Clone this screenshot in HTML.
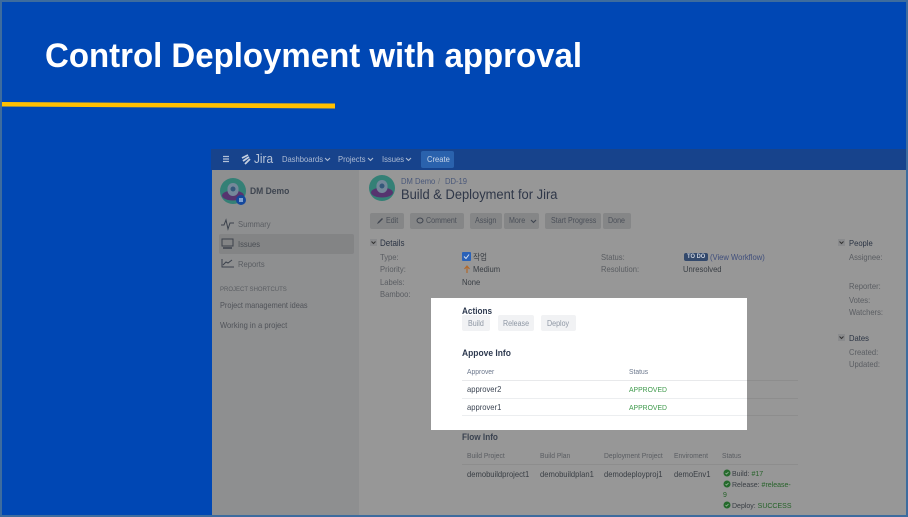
<!DOCTYPE html>
<html><head><meta charset="utf-8">
<style>
html,body{margin:0;padding:0}
body{width:908px;height:517px;overflow:hidden;position:relative;background:#0047b4;font-family:"Liberation Sans","Noto Sans CJK KR",sans-serif}
#frame{position:absolute;left:0;top:0;width:904px;height:513px;border:2px solid #3d6c9e;z-index:20;pointer-events:none}
.abs{position:absolute}
.t{position:absolute;white-space:nowrap;line-height:12px;font-size:8.4px;color:#4b5059;filter:blur(.3px);transform:scaleX(.91);transform-origin:0 50%}
.l{color:#5a5d62}
.d{color:#393e44}
.h{color:#2b3444}
.g{color:#266229}
.k{font-size:7.800px}
.b{position:absolute;top:213px;height:16px;background:#858687;border-radius:2px}
.w{color:#8d96a3;font-size:7.800px}
.ab{position:absolute;top:315px;height:16px;background:#f1f2f4;border-radius:2px}
.sm{font-size:7.400px}
</style></head><body>
<svg class="abs" style="left:0;top:0" width="908" height="517">
<text x="45" y="67" font-family="Liberation Sans" font-weight="bold" font-size="34" fill="#fff" textLength="537" lengthAdjust="spacingAndGlyphs">Control Deployment with approval</text>
<polygon points="2,102 180,103 335,103.500 335,108.500 180,107.500 2,106.500" fill="#ffc000"/>
</svg>
<div class="abs" style="left:212px;top:149px;width:696px;height:368px;background:#979797"></div>
<div class="abs" style="left:211px;top:149px;width:697px;height:21px;background:#17438c"></div>
<div class="abs" style="left:212px;top:170px;width:147px;height:346px;background:#8e8f90"></div>
<div class="abs" style="left:219px;top:234px;width:135px;height:20px;background:#838485;border-radius:2px"></div>
<div class="abs" style="left:421px;top:151px;width:33px;height:17px;background:#2a62ad;border-radius:2px"></div>

<!-- nav -->
<svg class="abs" style="left:211px;top:149px;filter:blur(.3px)" width="210" height="21">
<path d="M12 7.500h6M12 10h6M12 12.500h6" stroke="#b4c2d8" stroke-width="1.300"/>
<path d="M31 9l6-3M32 12l6-4M34 15l5-5" stroke="#c7d1e1" stroke-width="1.800" fill="none"/>
<path d="M114 9l2.500 2.500 2.500-2.500M157 9l2.500 2.500 2.500-2.500M195 9l2.500 2.500 2.500-2.500" stroke="#aebcd4" stroke-width="1.100" fill="none"/>
</svg>
<span class="t" style="left:254px;top:153px;font-size:13px;color:#b8c4d8">Jira</span>
<span class="t" style="left:282px;top:153px;color:#aebcd4">Dashboards</span>
<span class="t" style="left:338px;top:153px;color:#aebcd4">Projects</span>
<span class="t" style="left:382px;top:153px;color:#aebcd4">Issues</span>
<span class="t" style="left:427px;top:153px;color:#c8d5e8;font-size:8.400px">Create</span>

<!-- avatars -->
<svg class="abs" style="left:219px;top:177px;filter:blur(.3px)" width="32" height="32">
<circle cx="14" cy="14" r="13" fill="#348076"/><ellipse cx="14" cy="18.500" rx="11" ry="5" fill="#56346f"/><rect x="8.500" y="6" width="11" height="13" rx="5.500" fill="#74889a"/><circle cx="14" cy="12" r="2.500" fill="#35587a"/>
<circle cx="22" cy="23" r="5" fill="#14489c"/><rect x="20" y="21" width="4" height="4" fill="#7fa0d0"/>
</svg>
<svg class="abs" style="left:369px;top:175px;filter:blur(.3px)" width="28" height="28">
<circle cx="13" cy="13" r="13" fill="#348076"/><ellipse cx="13" cy="17.500" rx="11" ry="5" fill="#56346f"/><rect x="7.500" y="5" width="11" height="13" rx="5.500" fill="#74889a"/><circle cx="13" cy="11" r="2.500" fill="#35587a"/>
</svg>

<!-- sidebar -->
<span class="t" style="left:250px;top:185px;font-size:9.400px;font-weight:bold;color:#3e4550">DM Demo</span>
<svg class="abs" style="left:220px;top:216px;filter:blur(.3px)" width="16" height="56">
<path d="M1 9h3l2-5 2 9 2-6h4" stroke="#3c424c" fill="none" stroke-width="1"/>
<rect x="2" y="23" width="11" height="7" fill="none" stroke="#3c424c"/><path d="M3 32h9" stroke="#3c424c" stroke-width="1.500"/>
<path d="M2 43v8h12M3 49l3-3 2 1 4-3" stroke="#3c424c" fill="none"/>
</svg>
<span class="t l" style="left:238px;top:218px">Summary</span>
<span class="t l" style="left:238px;top:238px;color:#4a4e54">Issues</span>
<span class="t l" style="left:238px;top:258px">Reports</span>
<span class="t l" style="left:220px;top:284px;font-size:6.600px">PROJECT SHORTCUTS</span>
<span class="t l" style="left:220px;top:300px;color:#505359;font-size:8.100px">Project management ideas</span>
<span class="t l" style="left:220px;top:319px;color:#505359">Working in a project</span>

<!-- header -->
<span class="t" style="left:401px;top:175px;color:#4a587a">DM Demo</span>
<span class="t" style="left:438px;top:175px;color:#6a6f78">/</span>
<span class="t" style="left:445px;top:175px;color:#4a587a">DD-19</span>
<span class="t" style="left:401px;top:189px;font-size:14.200px;color:#2f3748">Build &amp; Deployment for Jira</span>

<div class="b" style="left:370px;width:34px"></div>
<div class="b" style="left:410px;width:54px"></div>
<div class="b" style="left:470px;width:32px"></div>
<div class="b" style="left:504px;width:35px"></div>
<div class="b" style="left:545px;width:56px"></div>
<div class="b" style="left:603px;width:28px"></div>
<svg class="abs" style="left:376px;top:217px" width="8" height="8"><path d="M1 7l1-2 4-4 1 1-4 4z" fill="#3f4550"/></svg>
<span class="t k" style="left:386px;top:215px">Edit</span>
<svg class="abs" style="left:416px;top:217px" width="8" height="8"><ellipse cx="4" cy="3.500" rx="3" ry="2.500" fill="none" stroke="#3f4550"/></svg>
<span class="t k" style="left:426px;top:215px">Comment</span>
<span class="t k" style="left:475px;top:215px">Assign</span>
<span class="t k" style="left:509px;top:215px">More</span>
<svg class="abs" style="left:530px;top:219px" width="7" height="5"><path d="M1 1l2.500 2.500L6 1" stroke="#3f4550" fill="none" stroke-width="1.100"/></svg>
<span class="t k" style="left:551px;top:215px">Start Progress</span>
<span class="t k" style="left:608px;top:215px">Done</span>

<!-- details -->
<svg class="abs" style="left:370px;top:239px" width="8" height="8"><rect width="7" height="7" fill="#8a8b8d"/><path d="M1.500 2.500l2 2 2-2" stroke="#333" fill="none"/></svg>
<span class="t h" style="left:380px;top:237px;font-size:8.800px">Details</span>
<span class="t l" style="left:380px;top:251px">Type:</span>
<span class="t l" style="left:380px;top:263px">Priority:</span>
<span class="t l" style="left:380px;top:276px">Labels:</span>
<span class="t l" style="left:380px;top:288px">Bamboo:</span>
<svg class="abs" style="left:462px;top:252px" width="10" height="10"><rect width="9" height="9" rx="1" fill="#2a62b8"/><path d="M2 4.500l2 2 3-4" stroke="#d8e2f0" fill="none"/></svg>
<span class="t d" style="left:473px;top:251px">작업</span>
<svg class="abs" style="left:463px;top:265px" width="8" height="9"><path d="M4 8V1M1.500 4L4 1l2.500 3" stroke="#b2692c" fill="none" stroke-width="1.200"/></svg>
<span class="t d" style="left:473px;top:263px">Medium</span>
<span class="t d" style="left:462px;top:276px">None</span>
<span class="t l" style="left:601px;top:251px">Status:</span>
<span class="t l" style="left:601px;top:263px">Resolution:</span>
<div class="abs" style="left:684px;top:253px;width:24px;height:8px;background:#33496c;border-radius:2px"></div>
<span class="t" style="left:687px;top:251px;font-size:6.400px;font-weight:bold;color:#c9cfd9">TO DO</span>
<span class="t" style="left:710px;top:251px;color:#3f4e7c">(View Workflow)</span>
<span class="t d" style="left:683px;top:263px">Unresolved</span>

<!-- right -->
<svg class="abs" style="left:838px;top:239px" width="8" height="8"><rect width="7" height="7" fill="#8a8b8d"/><path d="M1.500 2.500l2 2 2-2" stroke="#333" fill="none"/></svg>
<span class="t h" style="left:849px;top:237px">People</span>
<span class="t l" style="left:849px;top:251px">Assignee:</span>
<span class="t l" style="left:849px;top:280px">Reporter:</span>
<span class="t l" style="left:849px;top:294px">Votes:</span>
<span class="t l" style="left:849px;top:306px">Watchers:</span>
<svg class="abs" style="left:838px;top:334px" width="8" height="8"><rect width="7" height="7" fill="#8a8b8d"/><path d="M1.500 2.500l2 2 2-2" stroke="#333" fill="none"/></svg>
<span class="t h" style="left:849px;top:332px">Dates</span>
<span class="t l" style="left:849px;top:346px">Created:</span>
<span class="t l" style="left:849px;top:358px">Updated:</span>

<!-- white panel -->
<div class="abs" style="left:431px;top:298px;width:316px;height:132px;background:#fff"></div>
<div class="abs" style="left:747px;top:380px;width:51px;height:1px;background:#8d8d8d"></div>
<div class="abs" style="left:747px;top:398px;width:51px;height:1px;background:#8d8d8d"></div>
<div class="abs" style="left:747px;top:415px;width:51px;height:1px;background:#8d8d8d"></div>
<div class="abs" style="left:462px;top:380px;width:285px;height:1px;background:#e8e9eb"></div>
<div class="abs" style="left:462px;top:398px;width:285px;height:1px;background:#eceef0"></div>
<div class="abs" style="left:462px;top:415px;width:285px;height:1px;background:#eceef0"></div>
<span class="t" style="left:462px;top:305px;color:#2e3a50;font-size:9px;font-weight:bold">Actions</span>
<div class="ab" style="left:462px;width:28px"></div>
<div class="ab" style="left:498px;width:36px"></div>
<div class="ab" style="left:541px;width:35px"></div>
<span class="t w" style="left:468px;top:318px">Build</span>
<span class="t w" style="left:503px;top:318px">Release</span>
<span class="t w" style="left:547px;top:318px">Deploy</span>
<span class="t" style="left:462px;top:347px;color:#2e3a50;font-size:9.300px;font-weight:bold">Appove Info</span>
<span class="t sm" style="left:467px;top:366px;color:#6b778c">Approver</span>
<span class="t sm" style="left:629px;top:366px;color:#6b778c">Status</span>
<span class="t" style="left:467px;top:383px;color:#3d4654">approver2</span>
<span class="t" style="left:629px;top:384px;color:#3f9a4c;font-size:7.500px">APPROVED</span>
<span class="t" style="left:467px;top:401px;color:#3d4654">approver1</span>
<span class="t" style="left:629px;top:402px;color:#3f9a4c;font-size:7.500px">APPROVED</span>

<!-- flow -->
<span class="t" style="left:462px;top:431px;color:#3a4250;font-size:9px;font-weight:bold">Flow Info</span>
<span class="t l sm" style="left:467px;top:450px">Build Project</span>
<span class="t l sm" style="left:540px;top:450px">Build Plan</span>
<span class="t l sm" style="left:604px;top:450px">Deployment Project</span>
<span class="t l sm" style="left:674px;top:450px">Enviroment</span>
<span class="t l sm" style="left:722px;top:450px">Status</span>
<div class="abs" style="left:462px;top:464px;width:336px;height:1px;background:#8d8d8d"></div>
<span class="t d" style="left:467px;top:468px">demobuildproject1</span>
<span class="t d" style="left:540px;top:468px">demobuildplan1</span>
<span class="t d" style="left:604px;top:468px">demodeployproj1</span>
<span class="t d" style="left:674px;top:468px">demoEnv1</span>
<svg class="abs" style="left:723px;top:468px" width="10" height="44">
<g fill="#256a2c"><circle cx="4" cy="5" r="3.500"/><circle cx="4" cy="16" r="3.500"/><circle cx="4" cy="37" r="3.500"/></g>
<path d="M2.500 5l1 1 2-2M2.500 16l1 1 2-2M2.500 37l1 1 2-2" stroke="#9ab59d" fill="none" stroke-width=".8"/>
</svg>
<span class="t d" style="left:732px;top:468px;font-size:7.700px">Build: <span class="g">#17</span></span>
<span class="t d" style="left:732px;top:479px;font-size:7.700px">Release: <span class="g">#release-</span></span>
<span class="t g" style="left:723px;top:489px;font-size:7.700px">9</span>
<span class="t d" style="left:732px;top:500px;font-size:7.700px">Deploy: <span class="g">SUCCESS</span></span>
<div id="frame"></div>
</body></html>
